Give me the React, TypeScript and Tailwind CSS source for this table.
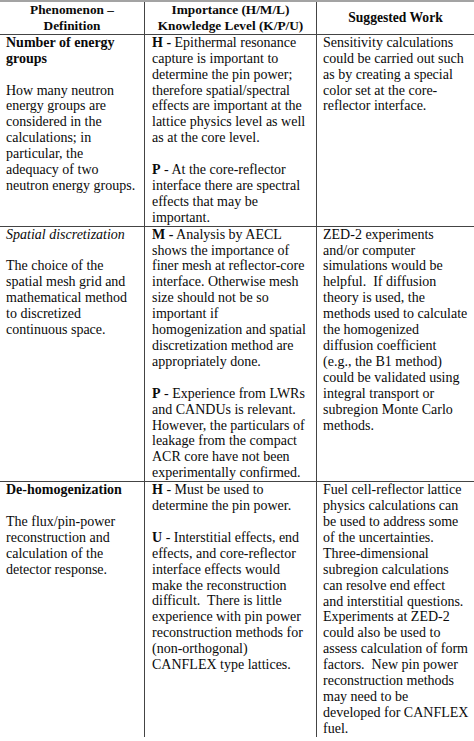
import React from 'react'

type Line = string | React.ReactNode

const rows: { c1: Line[][]; c2: Line[][]; c3: Line[][] }[] = [
  {
    c1: [
      [<b key="a">Number of energy</b>, <b key="b">groups</b>],
      ['How many neutron', 'energy groups are', 'considered in the', 'calculations; in', 'particular, the', 'adequacy of two', 'neutron energy groups.'],
    ],
    c2: [
      [<><b>H -</b> Epithermal resonance</>, 'capture is important to', 'determine the pin power;', 'therefore spatial/spectral', 'effects are important at the', 'lattice physics level as well', 'as at the core level.'],
      [<><b>P</b> - At the core-reflector</>, 'interface there are spectral', 'effects that may be', 'important.'],
    ],
    c3: [
      ['Sensitivity calculations', 'could be carried out such', 'as by creating a special', 'color set at the core-', 'reflector interface.'],
    ],
  },
  {
    c1: [
      [<i key="a">Spatial discretization</i>],
      ['The choice of the', 'spatial mesh grid and', 'mathematical method', 'to discretized', 'continuous space.'],
    ],
    c2: [
      [<><b>M -</b> Analysis by AECL</>, 'shows the importance of', 'finer mesh at reflector-core', 'interface. Otherwise mesh', 'size should not be so', 'important if', 'homogenization and spatial', 'discretization method are', 'appropriately done.'],
      [<><b>P</b> - Experience from LWRs</>, 'and CANDUs is relevant.', 'However, the particulars of', 'leakage from the compact', 'ACR core have not been', 'experimentally confirmed.'],
    ],
    c3: [
      ['ZED-2 experiments', 'and/or computer', 'simulations would be', 'helpful.  If diffusion', 'theory is used, the', 'methods used to calculate', 'the homogenized', 'diffusion coefficient', '(e.g., the B1 method)', 'could be validated using', 'integral transport or', 'subregion Monte Carlo', 'methods.'],
    ],
  },
  {
    c1: [
      [<b key="a">De-homogenization</b>],
      ['The flux/pin-power', 'reconstruction and', 'calculation of the', 'detector response.'],
    ],
    c2: [
      [<><b>H</b> - Must be used to</>, 'determine the pin power.'],
      [<><b>U</b> - Interstitial effects, end</>, 'effects, and core-reflector', 'interface effects would', 'make the reconstruction', 'difficult.  There is little', 'experience with pin power', 'reconstruction methods for', '(non-orthogonal)', 'CANFLEX type lattices.'],
    ],
    c3: [
      ['Fuel cell-reflector lattice', 'physics calculations can', 'be used to address some', 'of the uncertainties.', 'Three-dimensional', 'subregion calculations', 'can resolve end effect', 'and interstitial questions.', 'Experiments at ZED-2', 'could also be used to', 'assess calculation of form', 'factors.  New pin power', 'reconstruction methods', 'may need to be', 'developed for CANFLEX', 'fuel.'],
    ],
  },
]

function Cell({ paras, className }: { paras: Line[][]; className: string }) {
  return (
    <div className={className}>
      {paras.map((p, i) => (
        <div key={i} className={i > 0 ? 'mt-[15.9px]' : ''}>
          {p.map((l, j) => (
            <div key={j} className="whitespace-pre">{l}</div>
          ))}
        </div>
      ))}
    </div>
  )
}

export default function App() {
  return (
    <div className="w-[474px] min-h-[741px] bg-white text-[#0a0a0a] font-['Liberation_Serif',serif] text-[14px] leading-[15.9px]">
      <div className="grid grid-cols-[144px_172px_158px] border-t-2 border-[#a3a3a3]">
        <div className="border-b border-[#444] text-center font-bold text-[13.3px]">
          <div>Phenomenon –</div>
          <div>Definition</div>
        </div>
        <div className="border-b border-l border-[#444] text-center font-bold text-[13.3px]">
          <div>Importance (H/M/L)</div>
          <div>Knowledge Level (K/P/U)</div>
        </div>
        <div className="border-b border-l border-[#444] text-center font-bold text-[13.6px] flex items-center justify-center">
          Suggested Work
        </div>

        {rows.map((r, i) => {
          const b = i < rows.length - 1 ? 'border-b' : ''
          return (
            <React.Fragment key={i}>
              <Cell paras={r.c1} className={`${b} border-[#444] pl-[6px]`} />
              <Cell paras={r.c2} className={`${b} border-l border-[#444] pl-[7px]`} />
              <Cell paras={r.c3} className={`${b} border-l border-[#444] pl-[6px]`} />
            </React.Fragment>
          )
        })}
      </div>
    </div>
  )
}
